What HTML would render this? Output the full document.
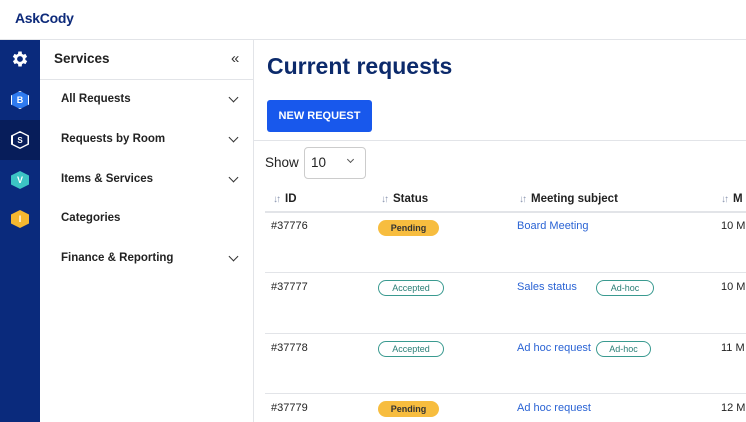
<!DOCTYPE html>
<html><head><style>
*{margin:0;padding:0;box-sizing:border-box}
body{width:746px;height:422px;overflow:hidden;background:#fff;font-family:"Liberation Sans",sans-serif;position:relative;color:#222}
.a{position:absolute}
.logo{left:15px;top:10px;font-weight:bold;font-size:14px;color:#0d2a7a;letter-spacing:-0.3px}
.rail{left:0;top:40px;width:40px;height:382px;background:#0a2a7c}
.hx{position:absolute;left:11px;width:18px;height:18px;clip-path:polygon(50% 0,100% 25%,100% 75%,50% 100%,0 75%,0 25%);color:#fff;font-size:9px;font-weight:bold;text-align:center;line-height:18px}
.mi{left:61px;font-size:11.5px;font-weight:bold;color:#222}
.chev{position:absolute;left:230px;width:7px;height:7px;border-right:1.6px solid #333;border-bottom:1.6px solid #333;transform:rotate(45deg)}
.th{font-size:11.5px;font-weight:bold;color:#222}
.th i{font-style:normal;color:#8a96b0;font-size:10px;margin-right:6px;letter-spacing:-2px}
.td{font-size:11px;color:#222}
.lk{font-size:11px;color:#2a63d4}
.pend{background:#f7bd3f;color:#333;font-size:9px;font-weight:bold;border-radius:9px;width:61px;height:16px;text-align:center;line-height:16px}
.acc{border:1.2px solid #3a9a90;color:#2a7e76;font-size:9px;border-radius:9px;width:66px;height:16px;text-align:center;line-height:14px}
.hr{height:1px;background:#e2e4e8}
</style></head><body>
<div class="a logo">AskCody</div>
<div class="a hr" style="left:0;top:39px;width:746px"></div>
<div class="a rail"></div>
<div class="a" style="left:0;top:120px;width:40px;height:40px;background:#071d5a"></div>
<svg class="a" style="left:10px;top:49px" width="20" height="20" viewBox="0 0 24 24"><path fill="#fff" d="M19.4 13a7.5 7.5 0 000-2l2.1-1.6-2-3.5-2.5 1a7.3 7.3 0 00-1.7-1L15 3h-4l-.4 2.9a7.3 7.3 0 00-1.7 1l-2.5-1-2 3.5L6.6 11a7.5 7.5 0 000 2l-2.1 1.6 2 3.5 2.5-1a7.3 7.3 0 001.7 1L11 21h4l.4-2.9a7.3 7.3 0 001.7-1l2.5 1 2-3.5zM13 15.5a3.5 3.5 0 110-7 3.5 3.5 0 010 7z" transform="translate(-1 0)"/></svg>
<div class="hx" style="top:91px;background:#2f7bf0;box-shadow:inset 0 0 0 1px #fff">B</div>
<div class="hx" style="top:131px;background:#fff"><div style="position:absolute;left:1.5px;top:1.5px;width:15px;height:15px;background:#071d5a;clip-path:polygon(50% 0,100% 25%,100% 75%,50% 100%,0 75%,0 25%);line-height:15px;font-size:8px">S</div></div>
<div class="hx" style="top:171px;background:#3cc4c4">V</div>
<div class="hx" style="top:210px;background:#f5b830">I</div>
<div class="a" style="left:54px;top:51px;font-size:13.5px;font-weight:bold;color:#222">Services</div>
<div class="a" style="left:231px;top:50px;font-size:15px;color:#333">«</div>
<div class="a hr" style="left:40px;top:79px;width:213px"></div>
<div class="a" style="left:253px;top:40px;width:1px;height:382px;background:#e2e4e8"></div>
<div class="a mi" style="top:93px">All Requests</div><div class="chev" style="top:94px"></div>
<div class="a mi" style="top:133px">Requests by Room</div><div class="chev" style="top:134px"></div>
<div class="a mi" style="top:173px">Items &amp; Services</div><div class="chev" style="top:174px"></div>
<div class="a mi" style="top:212px">Categories</div>
<div class="a mi" style="top:252px">Finance &amp; Reporting</div><div class="chev" style="top:253px"></div>
<div class="a" style="left:267px;top:53px;font-size:23px;font-weight:bold;color:#0c2a6b">Current requests</div>
<div class="a" style="left:267px;top:100px;width:105px;height:32px;background:#1858ec;border-radius:3px;color:#fff;font-size:11px;font-weight:bold;text-align:center;line-height:32px">NEW REQUEST</div>
<div class="a hr" style="left:254px;top:140px;width:492px"></div>
<div class="a" style="left:265px;top:155px;font-size:13.5px;color:#222">Show</div>
<div class="a" style="left:304px;top:147px;width:62px;height:32px;border:1px solid #ccc;border-radius:4px"></div>
<div class="a" style="left:311px;top:155px;font-size:13.5px">10</div>
<div class="a" style="left:348px;top:157px;width:5px;height:5px;border-right:1.2px solid #555;border-bottom:1.2px solid #555;transform:rotate(45deg)"></div>
<div class="a th" style="left:273px;top:193px"><i>↓↑</i>ID</div>
<div class="a th" style="left:381px;top:193px"><i>↓↑</i>Status</div>
<div class="a th" style="left:519px;top:193px"><i>↓↑</i>Meeting subject</div>
<div class="a th" style="left:721px;top:193px"><i>↓↑</i>M</div>
<div class="a" style="left:265px;top:211px;width:481px;height:2px;background:#e2e4e8"></div>
<div class="a td" style="left:271px;top:220px">#37776</div>
<div class="a pend" style="left:378px;top:220px">Pending</div>
<div class="a lk" style="left:517px;top:220px">Board Meeting</div>
<div class="a td" style="left:721px;top:220px">10 M</div>
<div class="a hr" style="left:265px;top:272px;width:481px"></div>
<div class="a td" style="left:271px;top:281px">#37777</div>
<div class="a acc" style="left:378px;top:280px">Accepted</div>
<div class="a lk" style="left:517px;top:281px">Sales status</div>
<div class="a acc" style="left:596px;top:280px;width:58px">Ad-hoc</div>
<div class="a td" style="left:721px;top:281px">10 M</div>
<div class="a hr" style="left:265px;top:333px;width:481px"></div>
<div class="a td" style="left:271px;top:342px">#37778</div>
<div class="a acc" style="left:378px;top:341px">Accepted</div>
<div class="a lk" style="left:517px;top:342px">Ad hoc request</div>
<div class="a acc" style="left:596px;top:341px;width:55px">Ad-hoc</div>
<div class="a td" style="left:721px;top:342px">11 M</div>
<div class="a hr" style="left:265px;top:393px;width:481px"></div>
<div class="a td" style="left:271px;top:402px">#37779</div>
<div class="a pend" style="left:378px;top:401px">Pending</div>
<div class="a lk" style="left:517px;top:402px">Ad hoc request</div>
<div class="a td" style="left:721px;top:402px">12 M</div>
</body></html>
